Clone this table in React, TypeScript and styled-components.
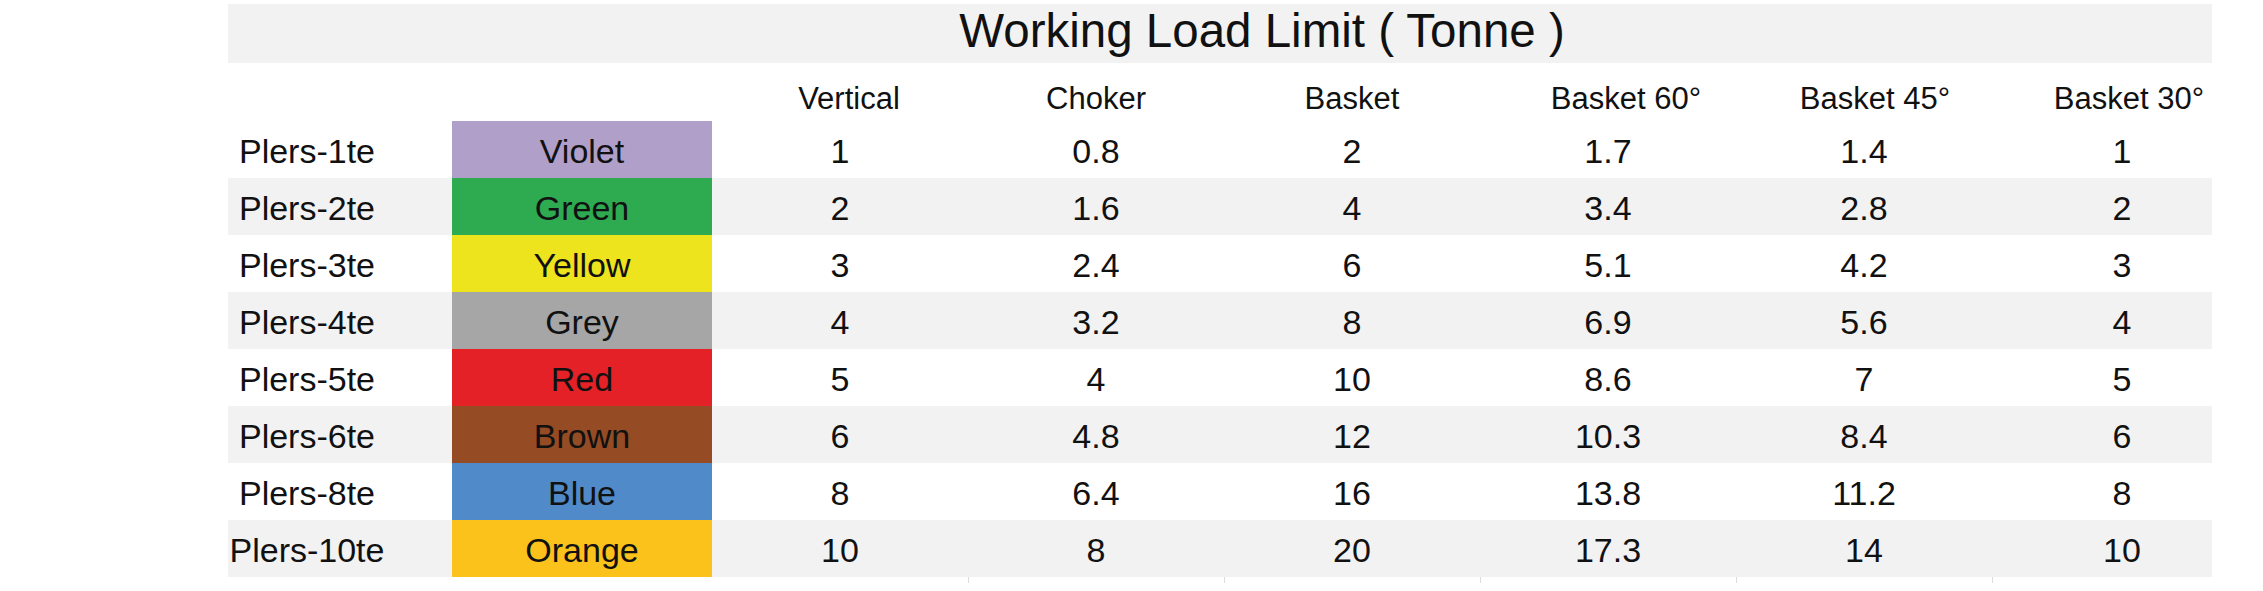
import styled, { createGlobalStyle } from 'styled-components';

interface SlingRow {
  name: string;
  colour: string;
  swatch: string;
  values: string[];
}

const headings: { label: string; shift: number }[] = [
  { label: 'Vertical', shift: 9 },
  { label: 'Choker', shift: 0 },
  { label: 'Basket', shift: -9 },
  { label: 'Basket 60°', shift: 18 },
  { label: 'Basket 45°', shift: 11 },
  { label: 'Basket 30°', shift: 7 },
];

const rows: SlingRow[] = [
  { name: 'Plers-1te', colour: 'Violet', swatch: '#b09fc8', values: ['1', '0.8', '2', '1.7', '1.4', '1'] },
  { name: 'Plers-2te', colour: 'Green', swatch: '#2eaa51', values: ['2', '1.6', '4', '3.4', '2.8', '2'] },
  { name: 'Plers-3te', colour: 'Yellow', swatch: '#ede41e', values: ['3', '2.4', '6', '5.1', '4.2', '3'] },
  { name: 'Plers-4te', colour: 'Grey', swatch: '#a6a6a6', values: ['4', '3.2', '8', '6.9', '5.6', '4'] },
  { name: 'Plers-5te', colour: 'Red', swatch: '#e52128', values: ['5', '4', '10', '8.6', '7', '5'] },
  { name: 'Plers-6te', colour: 'Brown', swatch: '#954b23', values: ['6', '4.8', '12', '10.3', '8.4', '6'] },
  { name: 'Plers-8te', colour: 'Blue', swatch: '#518ac8', values: ['8', '6.4', '16', '13.8', '11.2', '8'] },
  { name: 'Plers-10te', colour: 'Orange', swatch: '#fbc21b', values: ['10', '8', '20', '17.3', '14', '10'] },
];

const GlobalStyle = createGlobalStyle`
  body {
    margin: 0;
    background: #ffffff;
    color: #111111;
    font-family: "Liberation Sans", Arial, sans-serif;
  }
`;

const Page = styled.div`
  padding: 4px 0 0 228px;
`;

const Sheet = styled.div`
  width: 1984px;
`;

const TitleBand = styled.div`
  height: 59px;
  box-sizing: border-box;
  padding: 3px 0 9px 84px;
  display: flex;
  justify-content: center;
  align-items: flex-start;
  background: #f2f2f2;
  font-size: 47.5px;
  line-height: 1;
`;

const columns = '224px 260px repeat(5, 256px) 220px';

const HeaderRow = styled.div`
  display: grid;
  grid-template-columns: ${columns};
  height: 58px;
  align-items: end;
  padding-bottom: 7px;
  box-sizing: border-box;
`;

const HeadCell = styled.div<{ $shift: number; $last?: boolean }>`
  font-size: 31px;
  line-height: 1;
  text-align: center;
  white-space: nowrap;
  padding-left: ${({ $shift, $last }) => ($last ? 40 : 0) + $shift * 2}px;
`;

const Row = styled.div<{ $striped: boolean }>`
  display: grid;
  grid-template-columns: ${columns};
  height: 57px;
  background: ${({ $striped }) => ($striped ? '#f2f2f2' : '#ffffff')};
  font-size: 34px;
  line-height: 1;
`;

const Cell = styled.div`
  display: flex;
  align-items: center;
  justify-content: center;
  padding-top: 3px;
  white-space: nowrap;
`;

const NameCell = styled(Cell)`
  padding-right: 66px;
`;

const Swatch = styled(Cell)<{ $color: string }>`
  background: ${({ $color }) => $color};
`;

const ValueCell = styled(Cell)<{ $last?: boolean }>`
  padding-left: ${({ $last }) => ($last ? '40px' : '0')};
`;

const TickRow = styled.div`
  display: grid;
  grid-template-columns: ${columns};
  height: 6px;
`;

const Tick = styled.div<{ $mark: boolean }>`
  border-left: 1px solid ${({ $mark }) => ($mark ? '#dcdcdc' : 'transparent')};
`;

export default function App() {
  return (
    <>
      <GlobalStyle />
      <Page>
        <Sheet>
          <TitleBand>Working Load Limit ( Tonne )</TitleBand>
          <HeaderRow>
            <div />
            <div />
            {headings.map((h, i) => (
              <HeadCell key={h.label} $shift={h.shift} $last={i === headings.length - 1}>
                {h.label}
              </HeadCell>
            ))}
          </HeaderRow>
          {rows.map((row, i) => (
            <Row key={row.name} $striped={i % 2 === 1}>
              <NameCell>{row.name}</NameCell>
              <Swatch $color={row.swatch}>{row.colour}</Swatch>
              {row.values.map((v, j) => (
                <ValueCell key={j} $last={j === row.values.length - 1}>
                  {v}
                </ValueCell>
              ))}
            </Row>
          ))}
          <TickRow>
            {Array.from({ length: 8 }).map((_, i) => (
              <Tick key={i} $mark={i >= 3} />
            ))}
          </TickRow>
        </Sheet>
      </Page>
    </>
  );
}
